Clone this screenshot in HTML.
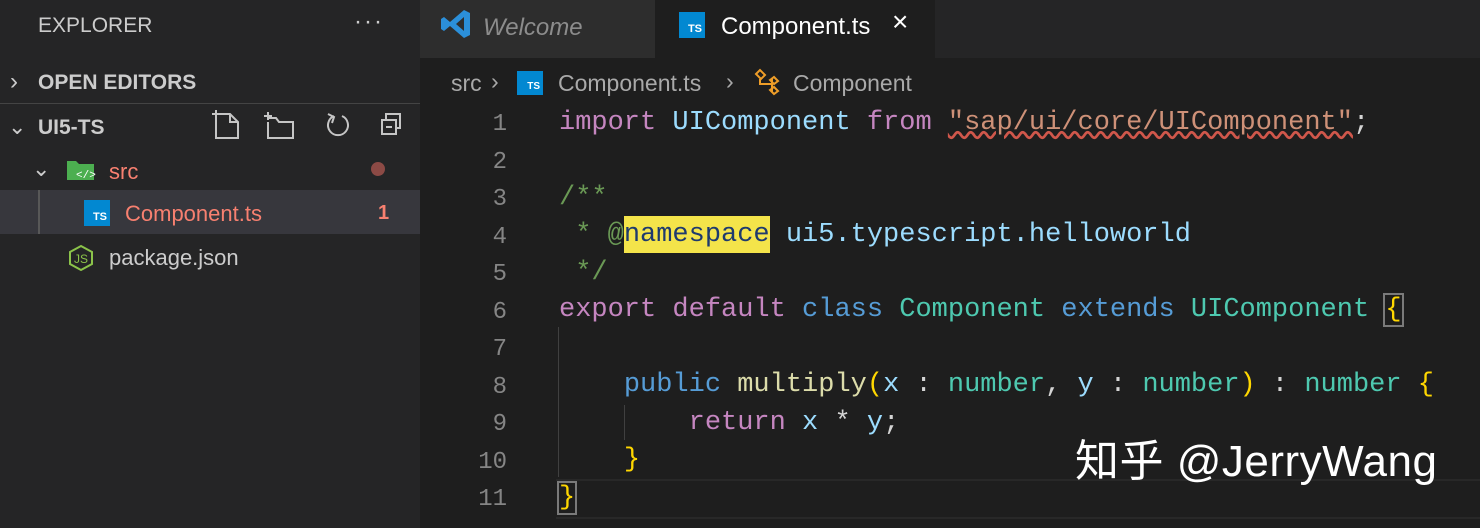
<!DOCTYPE html><html><head><meta charset="utf-8"><style>
body{margin:0;width:1480px;height:528px;background:#1e1e1e;overflow:hidden;font-family:"Segoe UI","Liberation Sans",sans-serif;position:relative}
.a{position:absolute;white-space:pre}
#side{position:absolute;left:0;top:0;width:420px;height:528px;background:#252526}
.sb{color:#ccc;font-size:22px}
.code{font-family:"Liberation Mono","DejaVu Sans Mono",monospace;font-size:27px;color:#d4d4d4}
.ln{font-family:"Liberation Mono",monospace;font-size:24px;color:#858585;width:60px;text-align:right;left:447px}
.k{color:#c586c0}.b{color:#569cd6}.t{color:#4ec9b0}.v{color:#9cdcfe}.f{color:#dcdcaa}.s{color:#ce9178}.c{color:#6a9955}.y{color:#ffd700}
</style></head><body>
<div id="side">
<div class="a sb" style="left:38px;top:14px;font-size:21px">EXPLORER</div>
<div class="a sb" style="left:354px;top:8px;font-size:24px;letter-spacing:2px">···</div>
<div class="a sb" style="left:10px;top:68px;font-size:24px">›</div>
<div class="a sb" style="left:38px;top:71px;font-weight:bold;font-size:21px">OPEN EDITORS</div>
<div style="position:absolute;left:0;top:103px;width:420px;height:1px;background:#444"></div>
<div class="a sb" style="left:8px;top:114px;font-size:22px">⌄</div>
<div class="a sb" style="left:38px;top:116px;font-weight:bold;font-size:21px">UI5-TS</div>
<svg class="a" style="left:210px;top:108px" width="200" height="32" fill="none" stroke="#c5c5c5" stroke-width="2"><path d="M6 6h14l8 8v16H6V10M2 6h8M6 2v8M20 6v8h8"/><path d="M58 10h8l3 4h14v16H58V14M54 8h8M58 4v8"/><path d="M124 8a10 10 0 1 0 8 0M118 6l6 3-2 6"/><path d="M172 12h14v14h-14zM176 12V6h14v14h-4M176 19h6"/></svg>
<div class="a sb" style="left:32px;top:156px;font-size:22px">⌄</div>
<svg class="a" style="left:66px;top:158px" width="30" height="24"><path d="M1 3h9l3 3h15v16H1z" fill="#4caf50"/><text x="10" y="20" font-size="11" fill="#fff" font-family="Liberation Mono">&lt;/&gt;</text></svg>
<div class="a" style="left:109px;top:159px;font-size:22px;color:#f88070">src</div>
<div style="position:absolute;left:371px;top:162px;width:14px;height:14px;border-radius:50%;background:#8c4a45"></div>
<div style="position:absolute;left:0;top:190px;width:420px;height:44px;background:#37373d"></div>
<div style="position:absolute;left:38px;top:190px;width:2px;height:44px;background:#585858"></div>
<div class="a" style="left:84px;top:200px;width:26px;height:26px;background:#0288d1;color:#fff;font-size:11px;font-weight:bold;line-height:34px;text-align:right;box-sizing:border-box;padding-right:3px">TS</div>
<div class="a" style="left:125px;top:201px;font-size:22px;color:#f88070">Component.ts</div>
<div class="a" style="left:378px;top:202px;font-size:20px;color:#f88070;font-weight:bold">1</div>
<svg class="a" style="left:68px;top:244px" width="26" height="28" fill="none" stroke="#8bc34a" stroke-width="2"><path d="M13 2l11 6v12l-11 6-11-6V8z"/><text x="6" y="19" font-size="12" fill="#8bc34a" stroke="none" font-family="Liberation Sans">JS</text></svg>
<div class="a" style="left:109px;top:245px;font-size:22px;color:#ccc">package.json</div>
</div>
<div style="position:absolute;left:420px;top:0;width:1060px;height:58px;background:#252526"></div>
<div style="position:absolute;left:420px;top:0;width:235px;height:58px;background:#2d2d2d"></div>
<div style="position:absolute;left:655px;top:0;width:280px;height:58px;background:#1e1e1e"></div>
<svg class="a" style="left:440px;top:8px" width="32" height="32"><path d="M24 2l6 3v22l-6 3L10 18l-6 5-3-2V11l3-2 6 5zM24 9l-8 7 8 7z" fill="#2b8fd9"/></svg>
<div class="a" style="left:483px;top:14px;font-size:24px;color:#8c8c8c;font-style:italic">Welcome</div>
<div class="a" style="left:679px;top:12px;width:26px;height:26px;background:#0288d1;color:#fff;font-size:11px;font-weight:bold;line-height:34px;text-align:right;box-sizing:border-box;padding-right:3px">TS</div>
<div class="a" style="left:721px;top:13px;font-size:24px;color:#fff">Component.ts</div>
<div class="a" style="left:892px;top:6px;font-size:28px;color:#fff">×</div>
<div class="a" style="left:451px;top:70px;font-size:23px;color:#a9a9a9">src</div>
<div class="a" style="left:491px;top:68px;font-size:23px;color:#a9a9a9">›</div>
<div class="a" style="left:517px;top:71px;width:26px;height:24px;background:#0288d1;color:#fff;font-size:10px;font-weight:bold;line-height:32px;text-align:right;box-sizing:border-box;padding-right:3px">TS</div>
<div class="a" style="left:558px;top:70px;font-size:23px;color:#a9a9a9">Component.ts</div>
<div class="a" style="left:726px;top:68px;font-size:23px;color:#a9a9a9">›</div>
<svg class="a" style="left:752px;top:68px" width="30" height="30" fill="none" stroke="#ee9d28" stroke-width="2"><path d="M4 6l4-4 5 5-4 4zM12 16h8M20 10v14M18 12l4-3 4 4-4 3zM18 22l4-3 4 4-4 3zM8 11v5h4"/></svg>
<div class="a" style="left:793px;top:70px;font-size:23px;color:#a9a9a9">Component</div>
<div style="position:absolute;left:556px;top:479px;width:924px;height:36px;border-top:2px solid #282828;border-bottom:2px solid #282828"></div>
<div style="position:absolute;left:558px;top:327px;width:1px;height:150px;background:#404040"></div>
<div style="position:absolute;left:624px;top:405px;width:1px;height:35px;background:#404040"></div>
<div style="position:absolute;left:624px;top:216px;width:146px;height:37px;background:#f4e44a"></div>
<div id="code">
<div class="a ln" style="top:111px">1</div><div class="a ln" style="top:149px">2</div><div class="a ln" style="top:186px">3</div><div class="a ln" style="top:224px">4</div><div class="a ln" style="top:261px">5</div><div class="a ln" style="top:299px">6</div><div class="a ln" style="top:336px">7</div><div class="a ln" style="top:374px">8</div><div class="a ln" style="top:411px">9</div><div class="a ln" style="top:449px">10</div><div class="a ln" style="top:486px">11</div>
<div class="a code" style="left:559px;top:108px"><span class="k">import</span> <span class="v">UIComponent</span> <span class="k">from</span> <span class="s" style="text-decoration:underline wavy #d0574b">"sap/ui/core/UIComponent"</span>;</div>
<div class="a code c" style="left:559px;top:183px">/**</div>
<div class="a code c" style="left:559px;top:220px"> * @<span style="color:#1e3a6e">namespace</span> <span class="v">ui5.typescript.helloworld</span></div>
<div class="a code c" style="left:559px;top:258px"> */</div>
<div class="a code" style="left:559px;top:295px"><span class="k">export</span> <span class="k">default</span> <span class="b">class</span> <span class="t">Component</span> <span class="b">extends</span> <span class="t">UIComponent</span> <span class="y" style="outline:2px solid #7a7a7a">{</span></div>
<div class="a code" style="left:559px;top:370px">    <span class="b">public</span> <span class="f">multiply</span><span class="y">(</span><span class="v">x</span> : <span class="t">number</span>, <span class="v">y</span> : <span class="t">number</span><span class="y">)</span> : <span class="t">number</span> <span class="y">{</span></div>
<div class="a code" style="left:559px;top:408px">        <span class="k">return</span> <span class="v">x</span> * <span class="v">y</span>;</div>
<div class="a code" style="left:559px;top:445px">    <span class="y">}</span></div>
<div class="a code" style="left:559px;top:483px"><span class="y" style="outline:2px solid #7a7a7a">}</span></div>
</div>
<div class="a" style="left:1075px;top:425px;font-size:44px;color:#fff;letter-spacing:0.5px;font-family:'Liberation Sans','Noto Sans CJK SC',sans-serif">知乎 @JerryWang</div>
</body></html>
